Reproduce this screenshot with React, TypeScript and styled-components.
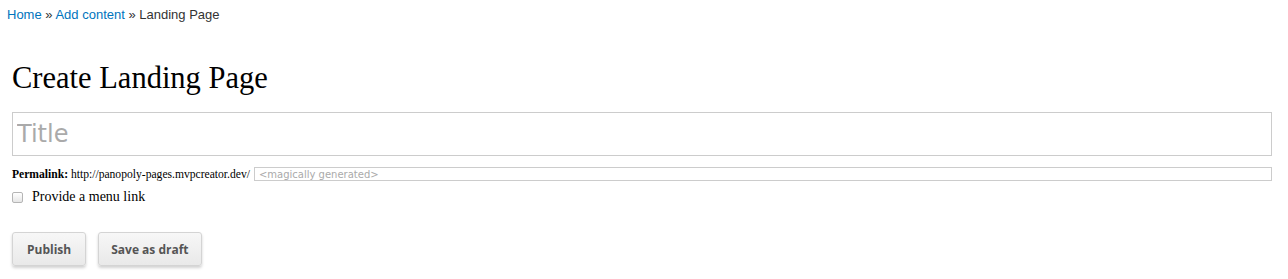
import React from "react";
import styled, { createGlobalStyle } from "styled-components";

const Global = createGlobalStyle`
  html, body { margin: 0; padding: 0; background: #fff; }
  body { font-family: "Liberation Serif", serif; color: #000; }
  * { box-sizing: border-box; }
`;

const Page = styled.div`
  width: 1288px;
  height: 279px;
  padding: 7px 16px 0 12px;
`;

const Breadcrumb = styled.nav`
  font-family: "Liberation Sans", Arial, sans-serif;
  font-size: 13px;
  line-height: 15px;
  color: #333;
  margin-left: -5px;
  a { color: #0074bd; text-decoration: none; }
`;

const Heading = styled.h1`
  font-family: "Liberation Serif", Georgia, serif;
  font-weight: normal;
  font-size: 30.5px;
  line-height: 34px;
  margin: 39px 0 17px 0;
`;

const TitleInput = styled.input`
  display: block;
  width: 1260px;
  height: 44px;
  border: 1px solid #ccc;
  padding: 0 4px;
  font-family: "DejaVu Sans", Verdana, sans-serif;
  font-size: 24px;
  outline: none;
  &::placeholder { color: #aaa; }
`;

const PermaRow = styled.div`
  display: flex;
  align-items: center;
  gap: 4px;
  margin-top: 11px;
  font-size: 11.6px;
  b { font-weight: bold; }
`;

const SmallInput = styled.input`
  flex: 1;
  height: 14px;
  border: 1px solid #ccc;
  padding: 0 4px;
  font-family: "DejaVu Sans", Verdana, sans-serif;
  font-size: 10px;
  outline: none;
  &::placeholder { color: #aaa; }
`;

const CheckRow = styled.label`
  display: flex;
  align-items: center;
  gap: 9px;
  margin-top: 8px;
  font-size: 14px;
`;

const Box = styled.span`
  width: 11px;
  height: 11px;
  border: 1px solid #b5b5b5;
  border-radius: 2px;
  background: linear-gradient(#fff, #e6e6e6);
`;

const Actions = styled.div`
  display: flex;
  gap: 12px;
  margin-top: 27px;
`;

const Button = styled.button<{ $pad: number }>`
  font-family: "Open Sans", sans-serif;
  font-weight: bold;
  font-size: 12px;
  color: #555;
  height: 34px;
  padding: 0 ${(p) => p.$pad}px;
  border: 1px solid #d4d4d4;
  border-radius: 3px;
  background: linear-gradient(#f7f7f7, #e9e9e9);
  box-shadow: 0 2px 3px rgba(0, 0, 0, 0.18);
`;

export default function App() {
  return (
    <Page>
      <Global />
      <Breadcrumb>
        <a href="#">Home</a> » <a href="#">Add content</a> » Landing Page
      </Breadcrumb>
      <Heading>Create Landing Page</Heading>
      <TitleInput placeholder="Title" />
      <PermaRow>
        <span>
          <b>Permalink:</b> http://panopoly-pages.mvpcreator.dev/
        </span>
        <SmallInput placeholder="<magically generated>" />
      </PermaRow>
      <CheckRow>
        <Box />
        Provide a menu link
      </CheckRow>
      <Actions>
        <Button $pad={14}>Publish</Button>
        <Button $pad={12}>Save as draft</Button>
      </Actions>
    </Page>
  );
}
